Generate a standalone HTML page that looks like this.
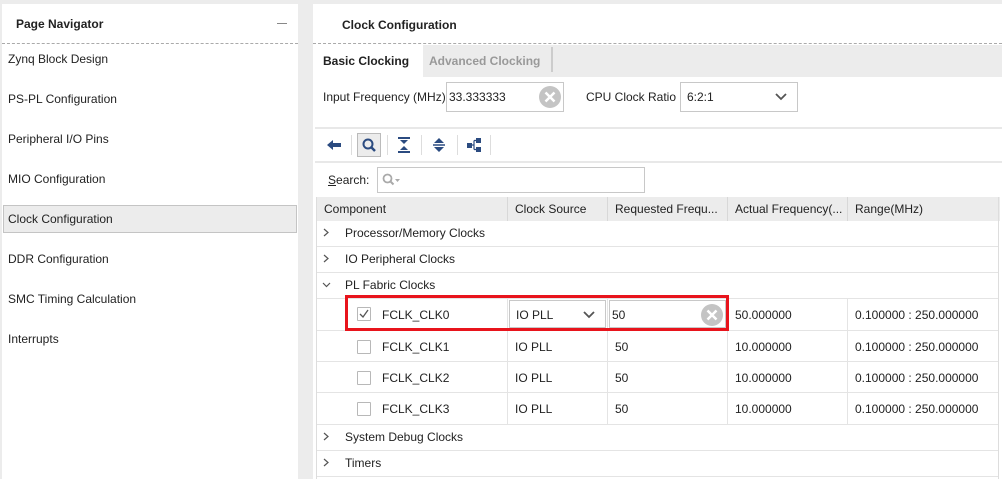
<!DOCTYPE html><html><head><style>
*{margin:0;padding:0;box-sizing:border-box}
body{width:1002px;height:479px;background:#ececec;font-family:"Liberation Sans",sans-serif;font-size:12px;color:#222;position:relative;overflow:hidden}
.a{position:absolute}
.t{position:absolute;white-space:nowrap;line-height:14px}
.hl{position:absolute;height:1px;background:#e4e4e4}
.vl{position:absolute;width:1px;background:#e4e4e4}
.cb{position:absolute;width:14px;height:14px;border:1px solid #b8b8b8;background:#fff;border-radius:1px}
</style></head><body>
<div class="a" style="left:2px;top:4px;width:296px;height:475px;background:#fff"></div>
<div class="t" style="left:16px;top:17px;font-weight:bold">Page Navigator</div>
<div class="a" style="left:277px;top:23px;width:10px;height:1px;background:#888"></div>
<div class="a" style="left:2px;top:43px;width:296px;border-top:1px dashed #aaa"></div>
<div class="t" style="left:8px;top:52px">Zynq Block Design</div>
<div class="t" style="left:8px;top:92px">PS-PL Configuration</div>
<div class="t" style="left:8px;top:132px">Peripheral I/O Pins</div>
<div class="t" style="left:8px;top:172px">MIO Configuration</div>
<div class="a" style="left:3px;top:205px;width:294px;height:28px;background:#ececec;border:1px solid #c4c4c4"></div>
<div class="t" style="left:8px;top:212px">Clock Configuration</div>
<div class="t" style="left:8px;top:252px">DDR Configuration</div>
<div class="t" style="left:8px;top:292px">SMC Timing Calculation</div>
<div class="t" style="left:8px;top:332px">Interrupts</div>
<div class="a" style="left:313px;top:4px;width:689px;height:475px;background:#fff"></div>
<div class="t" style="left:342px;top:18px;font-weight:bold">Clock Configuration</div>
<div class="a" style="left:313px;top:43px;width:689px;border-top:1px dashed #aaa"></div>
<div class="a" style="left:315px;top:45px;width:687px;height:32px;background:#ececec"></div>
<div class="a" style="left:315px;top:45px;width:108px;height:32px;background:#fff"></div>
<div class="t" style="left:323px;top:54px;font-weight:bold">Basic Clocking</div>
<div class="t" style="left:429px;top:54px;font-weight:bold;color:#999">Advanced Clocking</div>
<div class="a" style="left:551px;top:47px;width:2px;height:25px;background:#ccc"></div>
<div class="t" style="left:323px;top:90px">Input Frequency (MHz)</div>
<div class="a" style="left:446px;top:82px;width:118px;height:30px;border:1px solid #c8c8c8"></div>
<div class="t" style="left:449px;top:90px">33.333333</div>
<svg class="a" style="left:539px;top:86px" width="22" height="22"><circle cx="11" cy="11" r="11" fill="#c4c4c4"/><path d="M6.5 6.5L15.5 15.5M15.5 6.5L6.5 15.5" stroke="#fff" stroke-width="2.5"/></svg>
<div class="t" style="left:586px;top:90px">CPU Clock Ratio</div>
<div class="a" style="left:680px;top:82px;width:118px;height:30px;border:1px solid #c8c8c8"></div>
<div class="t" style="left:687px;top:90px">6:2:1</div>
<svg class="a" style="left:775px;top:93px" width="12" height="8"><path d="M1 1L6 6L11 1" stroke="#555" stroke-width="1.8" fill="none"/></svg>
<div class="a" style="left:315px;top:127px;width:687px;height:2px;background:#e8e8e8"></div>
<svg class="a" style="left:326px;top:138px" width="16" height="14"><path d="M1 7L7 2V5H15V9H7V12Z" fill="#2b4b80"/></svg>
<div class="vl" style="left:351px;top:135px;height:20px;background:#ddd"></div>
<div class="a" style="left:357px;top:133px;width:24px;height:24px;background:#ececec;border:1px solid #bbb"></div>
<svg class="a" style="left:361px;top:137px" width="16" height="16"><circle cx="7" cy="7" r="4.5" stroke="#2b4b80" stroke-width="2" fill="none"/><path d="M10 10L14 14" stroke="#2b4b80" stroke-width="2.5"/></svg>
<div class="vl" style="left:387px;top:135px;height:20px;background:#ddd"></div>
<svg class="a" style="left:397px;top:137px" width="14" height="16"><path d="M1 1H13M1 15H13" stroke="#2b4b80" stroke-width="2"/><path d="M3 3H11L7 7ZM3 13H11L7 9Z" fill="#2b4b80"/></svg>
<div class="vl" style="left:421px;top:135px;height:20px;background:#ddd"></div>
<svg class="a" style="left:432px;top:137px" width="14" height="16"><path d="M1 8H13" stroke="#2b4b80" stroke-width="1.5"/><path d="M2 6H12L7 1ZM2 10H12L7 15Z" fill="#2b4b80"/></svg>
<div class="vl" style="left:457px;top:135px;height:20px;background:#ddd"></div>
<svg class="a" style="left:466px;top:137px" width="16" height="16"><rect x="1" y="6" width="5" height="5" fill="#2b4b80"/><rect x="10" y="1" width="5" height="5" fill="#2b4b80"/><rect x="10" y="10" width="5" height="5" fill="#2b4b80"/><path d="M6 8H8M8 3.5V12.5M8 3.5H10M8 12.5H10" stroke="#2b4b80" stroke-width="1.2" fill="none"/></svg>
<div class="vl" style="left:490px;top:135px;height:20px;background:#ddd"></div>
<div class="a" style="left:315px;top:161px;width:687px;height:2px;background:#e8e8e8"></div>
<div class="t" style="left:328px;top:173px"><u>S</u>earch:</div>
<div class="a" style="left:377px;top:167px;width:268px;height:26px;border:1px solid #c8c8c8"></div>
<svg class="a" style="left:382px;top:173px" width="20" height="14"><circle cx="5.5" cy="5.5" r="4" stroke="#aaa" stroke-width="1.8" fill="none"/><path d="M8.5 8.5L11.5 11.5" stroke="#aaa" stroke-width="2"/><path d="M13 6H18L15.5 9Z" fill="#aaa"/></svg>
<div class="a" style="left:317px;top:197px;width:683px;height:24px;background:#ececec"></div>
<div class="vl" style="left:507px;top:197px;height:24px;background:#d8d8d8"></div>
<div class="vl" style="left:607px;top:197px;height:24px;background:#d8d8d8"></div>
<div class="vl" style="left:727px;top:197px;height:24px;background:#d8d8d8"></div>
<div class="vl" style="left:847px;top:197px;height:24px;background:#d8d8d8"></div>
<div class="t" style="left:324px;top:202px">Component</div>
<div class="t" style="left:515px;top:202px">Clock Source</div>
<div class="t" style="left:615px;top:202px">Requested Frequ...</div>
<div class="t" style="left:735px;top:202px">Actual Frequency(...</div>
<div class="t" style="left:855px;top:202px">Range(MHz)</div>
<div class="vl" style="left:316px;top:197px;height:282px;background:#ddd"></div>
<div class="vl" style="left:998px;top:197px;height:282px;background:#ddd"></div>
<svg class="a" style="left:323px;top:228px" width="6" height="9"><path d="M1 1L5 4.5L1 8" stroke="#555" stroke-width="1.2" fill="none"/></svg><div class="t" style="left:345px;top:226px">Processor/Memory Clocks</div>
<div class="hl" style="left:317px;top:246px;width:681px"></div>
<svg class="a" style="left:323px;top:254px" width="6" height="9"><path d="M1 1L5 4.5L1 8" stroke="#555" stroke-width="1.2" fill="none"/></svg><div class="t" style="left:345px;top:252px">IO Peripheral Clocks</div>
<div class="hl" style="left:317px;top:272px;width:681px"></div>
<svg class="a" style="left:322px;top:282px" width="9" height="6"><path d="M1 1L4.5 4.5L8 1" stroke="#555" stroke-width="1.2" fill="none"/></svg>
<div class="t" style="left:345px;top:278px">PL Fabric Clocks</div>
<div class="hl" style="left:317px;top:298px;width:681px"></div>
<div class="hl" style="left:317px;top:330px;width:681px"></div>
<div class="hl" style="left:317px;top:361px;width:681px"></div>
<div class="hl" style="left:317px;top:392px;width:681px"></div>
<div class="hl" style="left:317px;top:424px;width:681px"></div>
<div class="vl" style="left:507px;top:299px;height:125px"></div>
<div class="vl" style="left:607px;top:299px;height:125px"></div>
<div class="vl" style="left:727px;top:299px;height:125px"></div>
<div class="vl" style="left:847px;top:299px;height:125px"></div>
<div class="cb" style="left:357px;top:307px"></div>
<svg class="a" style="left:359px;top:309px" width="10" height="10"><path d="M1 5L4 8L9 1" stroke="#555" stroke-width="1.3" fill="none"/></svg>
<div class="cb" style="left:357px;top:340px"></div>
<div class="cb" style="left:357px;top:371px"></div>
<div class="cb" style="left:357px;top:402px"></div>
<div class="t" style="left:382px;top:308px">FCLK_CLK0</div>
<div class="t" style="left:382px;top:340px">FCLK_CLK1</div>
<div class="t" style="left:382px;top:371px">FCLK_CLK2</div>
<div class="t" style="left:382px;top:402px">FCLK_CLK3</div>
<div class="a" style="left:509px;top:300px;width:97px;height:28px;border:1px solid #c8c8c8"></div>
<div class="t" style="left:516px;top:308px">IO PLL</div>
<svg class="a" style="left:583px;top:311px" width="12" height="8"><path d="M1 1L6 6L11 1" stroke="#555" stroke-width="1.8" fill="none"/></svg>
<div class="t" style="left:515px;top:340px">IO PLL</div>
<div class="t" style="left:515px;top:371px">IO PLL</div>
<div class="t" style="left:515px;top:402px">IO PLL</div>
<div class="a" style="left:609px;top:300px;width:117px;height:28px;border:1px solid #c8c8c8"></div>
<div class="t" style="left:612px;top:308px">50</div>
<svg class="a" style="left:701px;top:304px" width="22" height="22"><circle cx="11" cy="11" r="11" fill="#c4c4c4"/><path d="M6.5 6.5L15.5 15.5M15.5 6.5L6.5 15.5" stroke="#fff" stroke-width="2.5"/></svg>
<div class="t" style="left:615px;top:340px">50</div>
<div class="t" style="left:615px;top:371px">50</div>
<div class="t" style="left:615px;top:402px">50</div>
<div class="t" style="left:735px;top:308px">50.000000</div>
<div class="t" style="left:735px;top:340px">10.000000</div>
<div class="t" style="left:735px;top:371px">10.000000</div>
<div class="t" style="left:735px;top:402px">10.000000</div>
<div class="t" style="left:855px;top:308px">0.100000 : 250.000000</div>
<div class="t" style="left:855px;top:340px">0.100000 : 250.000000</div>
<div class="t" style="left:855px;top:371px">0.100000 : 250.000000</div>
<div class="t" style="left:855px;top:402px">0.100000 : 250.000000</div>
<div class="a" style="left:345px;top:295px;width:384px;height:36px;border:3px solid #e8141c"></div>
<svg class="a" style="left:323px;top:432px" width="6" height="9"><path d="M1 1L5 4.5L1 8" stroke="#555" stroke-width="1.2" fill="none"/></svg><div class="t" style="left:345px;top:430px">System Debug Clocks</div>
<div class="hl" style="left:317px;top:450px;width:681px"></div>
<svg class="a" style="left:323px;top:458px" width="6" height="9"><path d="M1 1L5 4.5L1 8" stroke="#555" stroke-width="1.2" fill="none"/></svg><div class="t" style="left:345px;top:456px">Timers</div>
<div class="hl" style="left:317px;top:476px;width:681px"></div>
</body></html>
